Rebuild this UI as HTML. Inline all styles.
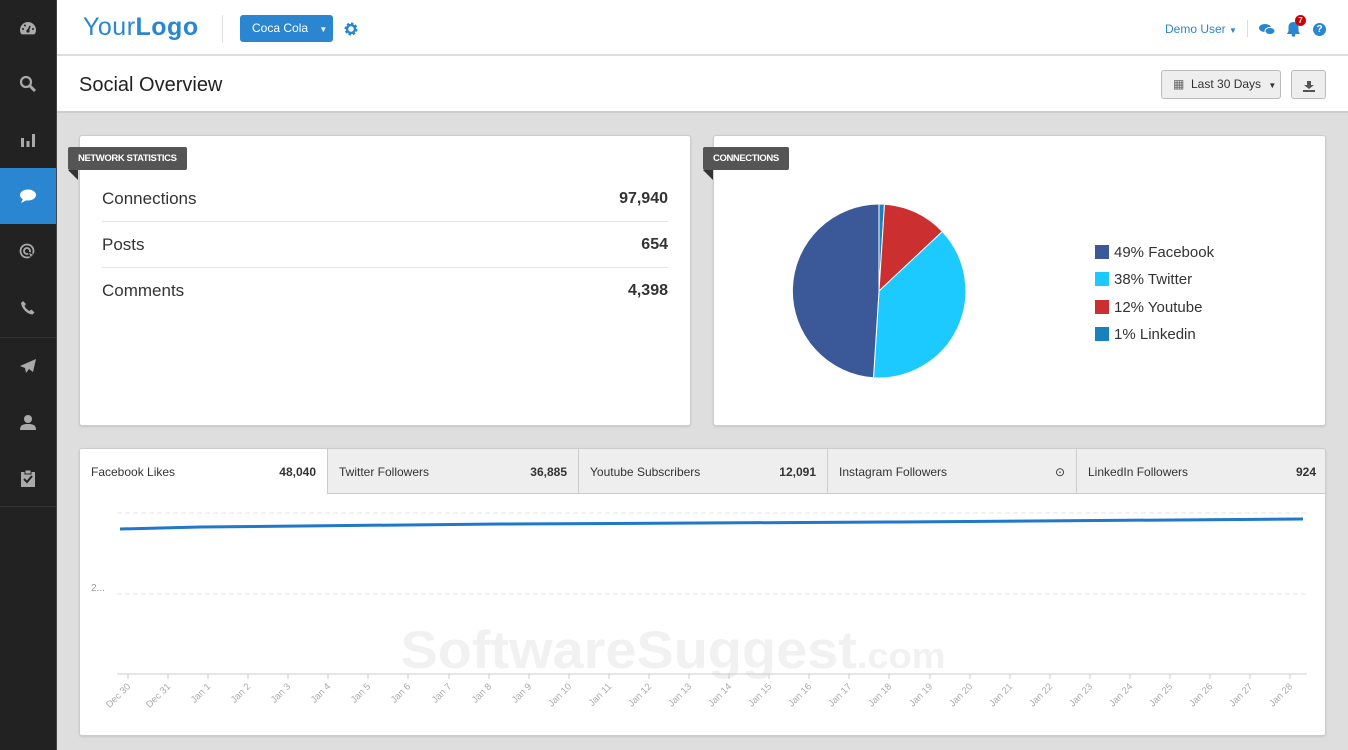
<!DOCTYPE html>
<html><head><meta charset="utf-8"><style>
*{box-sizing:border-box;margin:0;padding:0}
body{width:1348px;height:750px;overflow:hidden;background:#dedede;font-family:"Liberation Sans",sans-serif;position:relative;color:#333}
.sb{position:absolute;left:0;top:0;width:57px;height:750px;background:#222;border-right:1px solid #444}
.sb .it{position:absolute;left:0;width:56px;height:56px;display:flex;align-items:center;justify-content:center}
.sb .act{background:#2a86d1}
.sb .dv{position:absolute;left:0;width:56px;height:1px;background:#0e0e0e;border-bottom:1px solid #333}
.top{position:absolute;left:57px;top:0;width:1291px;height:56px;background:#fff;border-bottom:2px solid #ddd}
.hdr{position:absolute;left:57px;top:56px;width:1291px;height:57px;background:#fff;border-bottom:2px solid #ccc}
.card{position:absolute;background:#fff;border:1px solid #ccc;border-radius:3px;box-shadow:0 1px 2px rgba(0,0,0,.1)}
.tag{position:absolute;height:23px;background:#555;color:#fff;font-size:9.5px;line-height:23px;padding:0 10px;border-radius:2px;font-weight:bold;letter-spacing:-.4px}
.tag:after{content:"";position:absolute;left:0;top:23px;border-top:10px solid #333;border-left:10px solid transparent}
.row{position:absolute;left:22px;right:22px;height:46px;border-bottom:1px solid #e5e5e5;font-size:17px;line-height:46px}
.row b{float:right;font-size:16px}
.tab{position:absolute;top:0;height:45px;background:#eee;border-right:1px solid #ccc;border-bottom:1px solid #ccc;font-size:12px;line-height:47px;padding:0 11px}
.tab b{float:right}
</style></head><body>
<div class="sb">
 <div class="it" style="top:0"><svg width="18" height="16" viewBox="0 0 18 16"><path d="M9 2A8 8 0 0 0 1 10c0 2 .7 3.4 1.6 4.4h12.8c.9-1 1.6-2.4 1.6-4.4A8 8 0 0 0 9 2z" fill="#aaa"/><circle cx="9" cy="11" r="1.6" fill="#222"/><path d="M9 11l2-5" stroke="#222" stroke-width="1.6"/><circle cx="4" cy="9" r="1" fill="#222"/><circle cx="6" cy="5.5" r="1" fill="#222"/><circle cx="14" cy="9" r="1" fill="#222"/></svg></div>
 <div class="it" style="top:56px"><svg width="18" height="18"><circle cx="7" cy="7" r="5" stroke="#aaa" stroke-width="2.2" fill="none"/><path d="M11 11l5 5" stroke="#aaa" stroke-width="3"/></svg></div>
 <div class="it" style="top:112px"><svg width="16" height="16"><rect x="1" y="6" width="3" height="9" fill="#aaa"/><rect x="6.5" y="9" width="3" height="6" fill="#aaa"/><rect x="12" y="2" width="3" height="13" fill="#aaa"/></svg></div>
 <div class="it act" style="top:168px"><svg width="18" height="16"><ellipse cx="9" cy="7" rx="8" ry="5.5" fill="#fff"/><path d="M4 11l-2 4 6-3z" fill="#fff"/></svg></div>
 <div class="it" style="top:224px"><svg width="18" height="18"><circle cx="8" cy="8" r="6.5" stroke="#aaa" stroke-width="1.8" fill="none"/><circle cx="8" cy="8" r="3" stroke="#aaa" stroke-width="1.8" fill="none"/><path d="M9 9l7 3-3 1-1 3z" fill="#aaa" stroke="#222"/></svg></div>
 <div class="it" style="top:280px"><svg width="16" height="16"><path d="M3 1l3 3-1.5 2c1 2 3 4 5 5l2-1.5 3 3-2 2C7 14 2 9 1 3z" fill="#aaa"/></svg></div>
 <div class="dv" style="top:337px"></div>
 <div class="it" style="top:338px"><svg width="18" height="16"><path d="M17 1L1 8l5 2 1 5 3-4 4 3z" fill="#aaa"/></svg></div>
 <div class="it" style="top:394px"><svg width="16" height="16"><circle cx="8" cy="5" r="4" fill="#aaa"/><path d="M0 16c0-5 3-6 8-6s8 1 8 6z" fill="#aaa"/></svg></div>
 <div class="it" style="top:450px"><svg width="16" height="18"><rect x="1" y="3" width="14" height="15" fill="#aaa"/><rect x="5" y="1" width="6" height="4" fill="#aaa" stroke="#222"/><path d="M4 10l3 3 5-6" stroke="#222" stroke-width="2" fill="none"/></svg></div>
 <div class="dv" style="top:506px"></div>
</div>
<div class="top">
 <div style="position:absolute;left:26px;top:13px;font-size:25px;color:#2a86d1;letter-spacing:.5px">Your<b>Logo</b></div>
 <div style="position:absolute;left:165px;top:15px;width:1px;height:28px;background:#ddd"></div>
 <div style="position:absolute;left:183px;top:15px;width:93px;height:27px;background:#2a86d1;border-radius:3px;color:#fff;font-size:12px;line-height:27px;padding-left:12px">Coca Cola <span style="font-size:8px;margin-left:8px">▼</span></div>
 <svg style="position:absolute;left:287px;top:22px" width="14" height="14" viewBox="0 0 14 14"><circle cx="7" cy="7" r="5" fill="none" stroke="#2a86d1" stroke-width="3" stroke-dasharray="2.2 1.7"/><circle cx="7" cy="7" r="4" fill="none" stroke="#2a86d1" stroke-width="2.5"/></svg>
 <div style="position:absolute;left:1108px;top:22px;font-size:12px;color:#2a86d1">Demo User <span style="font-size:8px">▼</span></div>
 <div style="position:absolute;left:1190px;top:20px;width:1px;height:17px;background:#ddd"></div>
 <svg style="position:absolute;left:1202px;top:23px" width="16" height="13"><ellipse cx="6" cy="5" rx="6" ry="4" fill="#2a86d1"/><ellipse cx="11" cy="8" rx="5" ry="3.5" fill="#2a86d1" stroke="#fff"/></svg>
 <svg style="position:absolute;left:1229px;top:21px" width="15" height="16"><path d="M7.5 1c-3 0-5 2-5 5v4L1 13h13l-1.5-3V6c0-3-2-5-5-5z" fill="#2a86d1"/><circle cx="7.5" cy="14" r="1.8" fill="#2a86d1"/></svg>
 <div style="position:absolute;left:1238px;top:15px;width:11px;height:11px;border-radius:50%;background:#c00;color:#fff;font-size:8px;line-height:11px;text-align:center;font-weight:bold">7</div>
 <div style="position:absolute;left:1256px;top:23px;width:13px;height:13px;border-radius:50%;background:#2a86d1;color:#fff;font-size:10px;line-height:13px;text-align:center;font-weight:bold">?</div>
</div>
<div class="hdr">
 <div style="position:absolute;left:22px;top:18px;font-size:20px;color:#222">Social Overview</div>
 <div style="position:absolute;left:1104px;top:14px;width:120px;height:29px;background:#eee;border:1px solid #bbb;border-radius:3px;font-size:12px;line-height:27px;padding-left:11px"><span style="color:#666">▦</span>&nbsp; Last 30 Days <span style="font-size:8px;margin-left:4px">▼</span></div>
 <div style="position:absolute;left:1234px;top:14px;width:35px;height:29px;background:#eee;border:1px solid #bbb;border-radius:3px;text-align:center;padding-top:8px"><svg width="12" height="11"><path d="M4 0h4v4h3L6 8 1 4h3z M0 9h12v2H0z" fill="#555"/></svg></div>
</div>
<div class="card" style="left:79px;top:135px;width:612px;height:291px">
 <div class="row" style="top:40px">Connections<b>97,940</b></div>
 <div class="row" style="top:86px">Posts<b>654</b></div>
 <div class="row" style="top:132px;border:none">Comments<b>4,398</b></div>
</div>
<div class="tag" style="left:68px;top:147px">NETWORK STATISTICS</div>
<div class="card" style="left:713px;top:135px;width:613px;height:291px">
 <div style="position:absolute;left:381px;top:103px;font-size:15px;line-height:27.3px">
  <div><span style="display:inline-block;width:14px;height:14px;background:#3b5998;vertical-align:-2px;margin-right:5px"></span>49% Facebook</div>
  <div><span style="display:inline-block;width:14px;height:14px;background:#1dcaff;vertical-align:-2px;margin-right:5px"></span>38% Twitter</div>
  <div><span style="display:inline-block;width:14px;height:14px;background:#cb2f2f;vertical-align:-2px;margin-right:5px"></span>12% Youtube</div>
  <div><span style="display:inline-block;width:14px;height:14px;background:#1a80be;vertical-align:-2px;margin-right:5px"></span>1% Linkedin</div>
 </div>
</div>
<svg style="position:absolute;left:0;top:0" width="1348" height="450">
 <g stroke="#fff" stroke-width="1">
 <path d="M879 291L879 204A87 87 0 0 1 884.5 204.2z" fill="#1a80be"/>
 <path d="M879 291L884.5 204.2A87 87 0 0 1 942.4 231.5z" fill="#cb2f2f"/>
 <path d="M879 291L942.4 231.5A87 87 0 0 1 873.5 377.8z" fill="#1dcaff"/>
 <path d="M879 291L873.5 377.8A87 87 0 0 1 879 204z" fill="#3b5998"/>
 </g>
</svg>
<div class="tag" style="left:703px;top:147px">CONNECTIONS</div>
<div class="card" style="left:79px;top:448px;width:1247px;height:288px;overflow:hidden">
 <div class="tab" style="left:0;width:248px;background:#fff;border-bottom:none">Facebook Likes<b>48,040</b></div>
 <div class="tab" style="left:248px;width:251px">Twitter Followers<b>36,885</b></div>
 <div class="tab" style="left:499px;width:249px">Youtube Subscribers<b>12,091</b></div>
 <div class="tab" style="left:748px;width:249px">Instagram Followers<b style="font-weight:normal">⊙</b></div>
 <div class="tab" style="left:997px;width:250px;border-right:none">LinkedIn Followers<b>924</b></div>
</div>
<svg style="position:absolute;left:0;top:494px" width="1348" height="256" font-family="Liberation Sans" font-size="9" fill="#999">
 <text x="673" y="174" text-anchor="middle" font-size="53" font-weight="bold" fill="#f1f1f1" stroke="none" textLength="545" lengthAdjust="spacingAndGlyphs">SoftwareSuggest<tspan font-size="36">.com</tspan></text>
 <line x1="117" y1="19" x2="1307" y2="19" stroke="#e5e5e5" stroke-dasharray="5 3"/>
 <line x1="117" y1="100" x2="1307" y2="100" stroke="#e5e5e5" stroke-dasharray="5 3"/>
 <line x1="117" y1="180" x2="1307" y2="180" stroke="#ccc"/>
 <text x="91" y="97" font-size="10">2...</text>
 <path d="M120 35L200 33L500 30L900 28L1303 25" stroke="#1f78c9" stroke-width="3" fill="none"/>
</svg>
<svg style="position:absolute;left:0;top:670px" width="1348" height="80" font-family="Liberation Sans" font-size="9.5" fill="#aaa" stroke="#ccc">
<g stroke="#ccc"><path d="M128 4v5M168 4v5M208 4v5M248 4v5M288 4v5M328 4v5M368 4v5M408 4v5M449 4v5M489 4v5M529 4v5M569 4v5M609 4v5M649 4v5M689 4v5M729 4v5M769 4v5M809 4v5M849 4v5M889 4v5M930 4v5M970 4v5M1010 4v5M1050 4v5M1090 4v5M1130 4v5M1170 4v5M1210 4v5M1250 4v5M1290 4v5"/></g>
<g stroke="none" text-anchor="end">
<text transform="translate(131,17) rotate(-45)">Dec 30</text><text transform="translate(171,17) rotate(-45)">Dec 31</text><text transform="translate(211,17) rotate(-45)">Jan 1</text><text transform="translate(251,17) rotate(-45)">Jan 2</text><text transform="translate(291,17) rotate(-45)">Jan 3</text><text transform="translate(331,17) rotate(-45)">Jan 4</text><text transform="translate(371,17) rotate(-45)">Jan 5</text><text transform="translate(411,17) rotate(-45)">Jan 6</text><text transform="translate(452,17) rotate(-45)">Jan 7</text><text transform="translate(492,17) rotate(-45)">Jan 8</text><text transform="translate(532,17) rotate(-45)">Jan 9</text><text transform="translate(572,17) rotate(-45)">Jan 10</text><text transform="translate(612,17) rotate(-45)">Jan 11</text><text transform="translate(652,17) rotate(-45)">Jan 12</text><text transform="translate(692,17) rotate(-45)">Jan 13</text><text transform="translate(732,17) rotate(-45)">Jan 14</text><text transform="translate(772,17) rotate(-45)">Jan 15</text><text transform="translate(812,17) rotate(-45)">Jan 16</text><text transform="translate(852,17) rotate(-45)">Jan 17</text><text transform="translate(892,17) rotate(-45)">Jan 18</text><text transform="translate(933,17) rotate(-45)">Jan 19</text><text transform="translate(973,17) rotate(-45)">Jan 20</text><text transform="translate(1013,17) rotate(-45)">Jan 21</text><text transform="translate(1053,17) rotate(-45)">Jan 22</text><text transform="translate(1093,17) rotate(-45)">Jan 23</text><text transform="translate(1133,17) rotate(-45)">Jan 24</text><text transform="translate(1173,17) rotate(-45)">Jan 25</text><text transform="translate(1213,17) rotate(-45)">Jan 26</text><text transform="translate(1253,17) rotate(-45)">Jan 27</text><text transform="translate(1293,17) rotate(-45)">Jan 28</text>
</g></svg>
</body></html>
